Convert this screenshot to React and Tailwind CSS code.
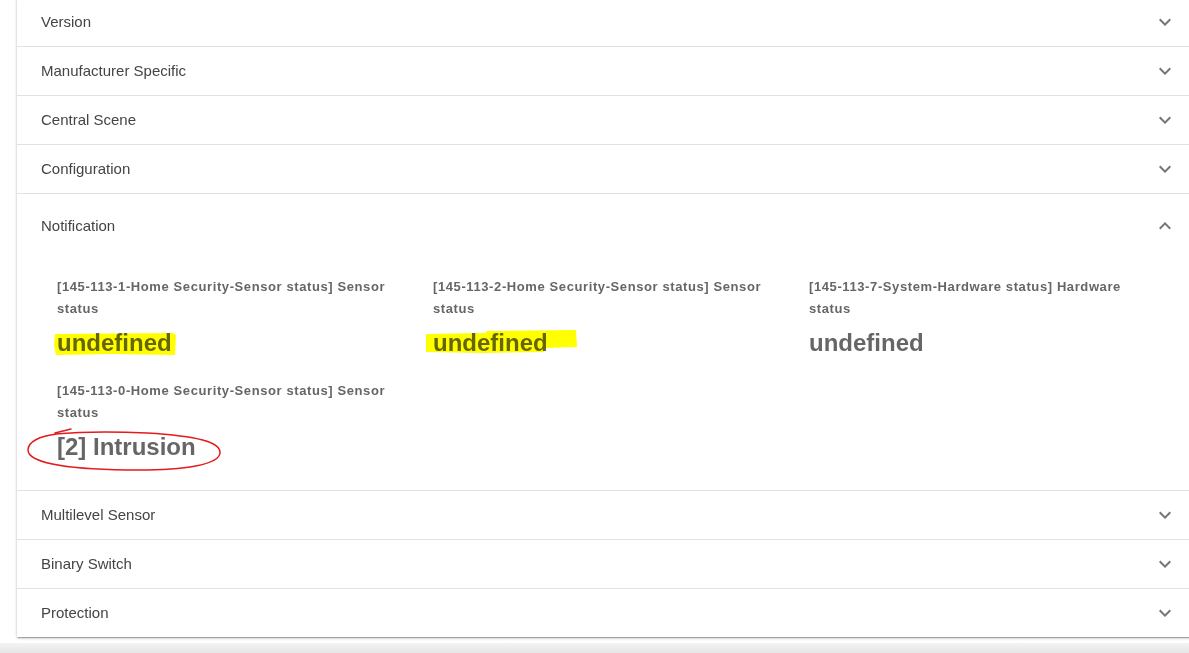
import React from "react";

const font = { fontFamily: '"Liberation Sans", Arial, sans-serif' };

function Chevron({ up }) {
  return (
    <svg width="24" height="24" viewBox="0 0 24 24" className="text-[#757575]">
      <path
        fill="currentColor"
        d={up ? "M12 8l-6 6 1.41 1.41L12 10.83l4.59 4.58L18 14z" : "M16.59 8.59L12 13.17 7.41 8.59 6 10l6 6 6-6z"}
      />
    </svg>
  );
}

function Row({ title, first }) {
  return (
    <div className={`flex h-[49px] items-center justify-between border-b border-[#e2e2e2] pl-6 pr-4 ${first ? "-mt-[2px]" : ""}`}>
      <span className="text-[15px] text-[#444]">{title}</span>
      <Chevron />
    </div>
  );
}

function Item({ label, value, children }) {
  return (
    <div className="relative px-4">
      <div className="text-[13px] font-bold leading-[22px] tracking-[0.6px] text-[#666]">{label}</div>
      <div className="relative mt-[5px] text-[24px] font-bold leading-[36px] text-[#666]">
        {value}
        {children}
      </div>
    </div>
  );
}

export default function App() {
  return (
    <div className="relative h-[653px] w-[1189px] overflow-hidden bg-white" style={font}>
      <div className="ml-[17px] w-[1176px] bg-white shadow-[0_1px_3px_rgba(0,0,0,0.22),0_1px_1px_rgba(0,0,0,0.14),0_2px_1px_-1px_rgba(0,0,0,0.12)]">
        <Row title="Version" first />
        <Row title="Manufacturer Specific" />
        <Row title="Central Scene" />
        <Row title="Configuration" />
        <div className="border-b border-[#e2e2e2]">
          <div className="flex h-[64px] items-center justify-between pl-6 pr-4">
            <span className="text-[15px] text-[#444]">Notification</span>
            <Chevron up />
          </div>
          <div className="grid w-[1176px] grid-cols-3 gap-y-[19px] px-6 pb-[25px] pt-[18px]">
            <Item label="[145-113-1-Home Security-Sensor status] Sensor status" value="undefined">
              <svg className="pointer-events-none absolute -left-[4px] top-[7px] mix-blend-multiply" width="130" height="26">
                <path d="M2 2 L120 1 L123 3 L122 23 L60 22 L3 23 L1 13 Z" fill="#ffff00" />
              </svg>
            </Item>
            <Item label="[145-113-2-Home Security-Sensor status] Sensor status" value="undefined">
              <svg className="pointer-events-none absolute -left-[8px] top-[5px] mix-blend-multiply" width="160" height="28">
                <path d="M1 4 L60 3 L62 1 L151 0 L152 17 L120 18 L119 22 L60 23 L1 22 Z" fill="#ffff00" />
              </svg>
            </Item>
            <Item label="[145-113-7-System-Hardware status] Hardware status" value="undefined" />
            <Item label="[145-113-0-Home Security-Sensor status] Sensor status" value="[2] Intrusion">
              <svg className="pointer-events-none absolute -left-[30px] -top-[1px]" width="200" height="50" viewBox="0 0 200 50">
                <path
                  d="M30 6 C12 8 1 14 1 22 C1 33 30 41 100 42 C160 43 192 36 193 25 C194 14 170 8 120 5 C80 3 50 4 28 6"
                  fill="none"
                  stroke="#e41b1b"
                  strokeWidth="1.5"
                  strokeLinecap="round"
                />
                <path d="M28 5 L44 1" fill="none" stroke="#e41b1b" strokeWidth="1.5" strokeLinecap="round" />
              </svg>
            </Item>
          </div>
        </div>
        <Row title="Multilevel Sensor" />
        <Row title="Binary Switch" />
        <div className="flex h-[48px] items-center justify-between pl-6 pr-4">
          <span className="text-[15px] text-[#444]">Protection</span>
          <Chevron />
        </div>
      </div>
      <div className="mt-[6px] h-[12px] w-full bg-gradient-to-b from-[#f3f3f3] to-[#e3e3e3]" />
    </div>
  );
}
